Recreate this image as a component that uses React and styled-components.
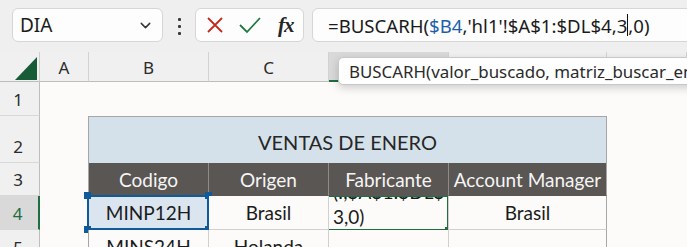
import React from "react";
import styled, { createGlobalStyle } from "styled-components";
import { ChevronDown } from "lucide-react";

const GlobalStyle = createGlobalStyle`
  html, body { margin: 0; padding: 0; overflow: hidden; background: #fcfbf9; }
  #root { width: 687px; height: 247px; overflow: hidden; }
`;

const Page = styled.div`
  width: 687px;
  height: 247px;
  display: flex;
  flex-direction: column;
  position: relative;
  overflow: hidden;
  font-family: "Noto Sans", sans-serif;
`;

const TopBar = styled.div`
  height: 52px;
  flex: none;
  display: flex;
  align-items: flex-start;
  padding: 8px 0 0 12px;
  box-sizing: border-box;
  background: #efefef;
`;

const NameBox = styled.div`
  width: 151px;
  height: 34px;
  box-sizing: border-box;
  background: #fdfdfd;
  border: 1px solid #d6d6d6;
  border-radius: 6px;
  display: flex;
  align-items: center;
  justify-content: space-between;
  padding: 0 8px 0 7px;
  font-size: 19px;
  color: #1b1b1b;
`;

const Dots = styled.div`
  width: 32px;
  display: flex;
  flex-direction: column;
  align-items: center;
  gap: 4px;
  padding-top: 10px;
  span {
    width: 3px;
    height: 3px;
    background: #3a3a3a;
    border-radius: 1px;
  }
`;

const FuncBox = styled.div`
  width: 109px;
  height: 34px;
  box-sizing: border-box;
  background: #fdfdfd;
  border: 1px solid #d6d6d6;
  border-radius: 6px;
  display: flex;
  align-items: center;
  padding: 0 0 0 9px;
  gap: 13px;
`;

const Fx = styled.span`
  font-family: "Liberation Serif", "DejaVu Serif", serif;
  font-style: italic;
  font-weight: bold;
  font-size: 21px;
  color: #262626;
  letter-spacing: -1px;
  margin-left: 3px;
`;

const FormulaBox = styled.div`
  flex: 1;
  margin-left: 8px;
  margin-right: -20px;
  height: 34px;
  box-sizing: border-box;
  background: #fdfdfd;
  border: 1px solid #d6d6d6;
  border-radius: 6px;
  display: flex;
  align-items: center;
  padding-left: 15px;
  font-size: 18.6px;
  color: #1b1b1b;
  white-space: nowrap;
`;

const Ref = styled.span`
  color: #1f5fa8;
`;

const Caret = styled.span`
  display: inline-block;
  width: 1px;
  height: 22px;
  background: #111;
  vertical-align: middle;
`;

const Grid = styled.div`
  display: grid;
  grid-template-columns: 40px 49px 120px 120px 120px 158px 1fr;
  grid-template-rows: 30px 34px 47px 33px 34px 34px;
  background: #fcfbf9;
`;

const Corner = styled.div`
  background: #f0f0f0;
  border-right: 1px solid #cfcfcf;
  border-bottom: 1px solid #bdbdbd;
  box-sizing: border-box;
  position: relative;
  svg { position: absolute; left: 15px; top: 5px; }
`;

const ColHead = styled.div`
  background: ${(p) => (p.$active ? "#d9d9d9" : "#f0f0f0")};
  border-right: 1px solid #d2d2d2;
  border-bottom: ${(p) => (p.$active ? "2px solid #1e6e42" : "1px solid #bdbdbd")};
  box-sizing: border-box;
  display: flex;
  align-items: center;
  justify-content: center;
  font-size: 17px;
  color: #2a2a2a;
  padding-top: 2px;
`;

const RowHead = styled.div`
  background: ${(p) => (p.$active ? "#d9d9d9" : "#f0f0f0")};
  border-right: ${(p) => (p.$active ? "2px solid #1e6e42" : "1px solid #bdbdbd")};
  border-bottom: 1px solid #d8d8d8;
  box-sizing: border-box;
  display: flex;
  align-items: flex-end;
  justify-content: center;
  padding-right: 3px;
  padding-bottom: 4px;
  font-size: 17px;
  color: ${(p) => (p.$active ? "#1e6e42" : "#2a2a2a")};
`;

const Blank = styled.div`
  background: #fcfbf9;
`;

const Title = styled.div`
  grid-column: 3 / 7;
  background: #d5e1ea;
  border: 1px solid #a6a6a6;
  border-bottom: none;
  margin-left: -1px;
  display: flex;
  align-items: center;
  justify-content: center;
  font-family: "Lato", sans-serif;
  font-size: 20px;
  color: #262626;
  padding-top: 4px;
`;

const Cell = styled.div`
  position: relative;
  box-sizing: border-box;
  display: flex;
  align-items: center;
  justify-content: center;
  font-family: "Lato", sans-serif;
  font-size: 19px;
  white-space: nowrap;
  overflow: ${(p) => (p.$clip ? "hidden" : "visible")};
  background: ${(p) => (p.$head ? "#5a5653" : p.$fill ? "#dae5ef" : "#fcfbf9")};
  color: ${(p) => (p.$head ? "#f5f5f5" : "#1b1b1b")};
  border-right: 1px solid ${(p) => (p.$head ? "#8e8a86" : "#d0d0d0")};
  border-bottom: 1px solid ${(p) => (p.$head ? "#5a5653" : "#d0d0d0")};
  border-left: ${(p) => (p.$first ? "1px solid #a6a6a6" : "none")};
  margin-left: ${(p) => (p.$first ? "-1px" : "0")};
  ${(p) => p.$last && "border-right: 1px solid #a6a6a6;"}
`;

const EditCell = styled.div`
  position: relative;
  box-sizing: border-box;
  overflow: hidden;
  font-family: "Lato", sans-serif;
  font-size: 19px;
  line-height: 25px;
  color: #1b1b1b;
  background: #fcfbf9;
  display: flex;
  flex-direction: column;
  justify-content: flex-end;
  padding: 0 0 1px 4px;
  white-space: nowrap;
  border-right: 1px solid #d0d0d0;
`;

const SelectBox = styled.div`
  position: absolute;
  left: -2px;
  top: -1px;
  right: -1px;
  bottom: -1px;
  border: 2px solid ${(p) => p.$color};
  pointer-events: none;
`;

const Handle = styled.span`
  position: absolute;
  width: 7px;
  height: 7px;
  background: ${(p) => p.$color};
  ${(p) => (p.$top ? "top: -5px;" : "bottom: -5px;")}
  ${(p) => (p.$left ? "left: -5px;" : "right: -5px;")}
`;

const Tooltip = styled.div`
  position: absolute;
  left: 338px;
  top: 57px;
  width: 420px;
  height: 28px;
  box-sizing: border-box;
  background: #fefefe;
  border: 1px solid #c8c8c8;
  border-radius: 5px;
  box-shadow: 0 3px 8px rgba(0, 0, 0, 0.18);
  display: flex;
  align-items: center;
  padding-left: 10px;
  font-size: 16.9px;
  color: #2a2a2a;
  white-space: nowrap;
`;

function XIcon() {
  return (
    <svg width="20" height="20" viewBox="0 0 20 20">
      <path d="M3 3 L17 17 M17 3 L3 17" stroke="#c42b1c" strokeWidth="1.8" fill="none" />
    </svg>
  );
}

function CheckIcon() {
  return (
    <svg width="24" height="20" viewBox="0 0 24 20">
      <path d="M2 10 L9 17 L22 3" stroke="#1e7a3e" strokeWidth="1.8" fill="none" />
    </svg>
  );
}

export default function App() {
  return (
    <>
      <GlobalStyle />
      <Page>
        <TopBar>
          <NameBox>
            <span>DIA</span>
            <ChevronDown size={17} strokeWidth={2} color="#333" />
          </NameBox>
          <Dots>
            <span />
            <span />
            <span />
          </Dots>
          <FuncBox>
            <XIcon />
            <CheckIcon />
            <Fx>fx</Fx>
          </FuncBox>
          <FormulaBox>
            =BUSCARH(<Ref>$B4</Ref>,'hl1'!$A$1:$DL$4,3<Caret />,0)
          </FormulaBox>
        </TopBar>
        <Grid>
          <Corner>
            <svg width="22" height="23" viewBox="0 0 22 23">
              <path d="M22 0 L22 23 L0 23 Z" fill="#185c37" />
            </svg>
          </Corner>
          <ColHead>A</ColHead>
          <ColHead>B</ColHead>
          <ColHead>C</ColHead>
          <ColHead $active>D</ColHead>
          <ColHead>E</ColHead>
          <ColHead>F</ColHead>

          <RowHead>1</RowHead>
          <Blank />
          <Blank />
          <Blank />
          <Blank />
          <Blank />
          <Blank />

          <RowHead>2</RowHead>
          <Blank />
          <Title>VENTAS DE ENERO</Title>
          <Blank />

          <RowHead>3</RowHead>
          <Blank />
          <Cell $head $first>Codigo</Cell>
          <Cell $head>Origen</Cell>
          <Cell $head>Fabricante</Cell>
          <Cell $head $last>Account Manager</Cell>
          <Blank />

          <RowHead $active>4</RowHead>
          <Blank />
          <Cell $first $fill>
            MINP12H
            <SelectBox $color="#0f5a9a">
              <Handle $color="#0f5a9a" $top $left />
              <Handle $color="#0f5a9a" $top />
              <Handle $color="#0f5a9a" $left />
              <Handle $color="#0f5a9a" />
            </SelectBox>
          </Cell>
          <Cell>Brasil</Cell>
          <EditCell>
            <div>(!,$A$1:$DL$4,</div>
            <div>3,0)</div>
            <SelectBox $color="#1e6e42">
              <Handle $color="#1e6e42" />
            </SelectBox>
          </EditCell>
          <Cell $last>Brasil</Cell>
          <Blank />

          <RowHead>5</RowHead>
          <Blank />
          <Cell $first $clip>MINS24H</Cell>
          <Cell $clip>Holanda</Cell>
          <Cell $clip />
          <Cell $last $clip />
          <Blank />
        </Grid>
        <Tooltip>BUSCARH(valor_buscado, matriz_buscar_en, indicador_filas)</Tooltip>
      </Page>
    </>
  );
}
